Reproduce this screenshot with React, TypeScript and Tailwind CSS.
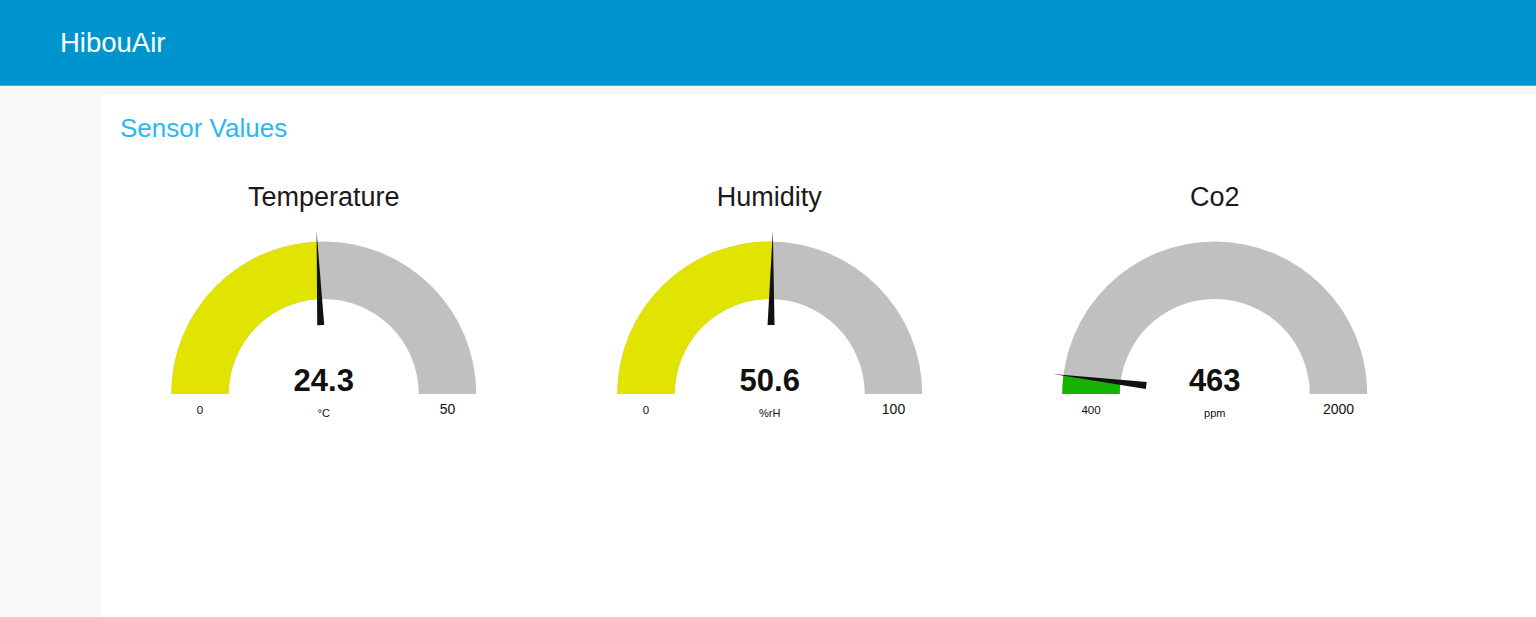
import React from "react";

type GaugeProps = {
  title: string;
  value: number;
  display: string;
  unit: string;
  min: number;
  max: number;
  color: string;
};

const W = 445.5;
const CX = W / 2;
const CY = 184;
const RO = 152.5;
const RI = 95;

function pt(r: number, a: number): [number, number] {
  return [CX - r * Math.cos(a), CY - r * Math.sin(a)];
}

function Gauge({ title, value, display, unit, min, max, color }: GaugeProps) {
  const frac = Math.max(0, Math.min(1, (value - min) / (max - min)));
  const a = frac * Math.PI;
  const [ox0, oy0] = pt(RO, 0);
  const [ox1, oy1] = pt(RO, a);
  const [ix1, iy1] = pt(RI, a);
  const [ix0, iy0] = pt(RI, 0);
  const fillPath = `M ${ox0} ${oy0} A ${RO} ${RO} 0 0 1 ${ox1} ${oy1} L ${ix1} ${iy1} A ${RI} ${RI} 0 0 0 ${ix0} ${iy0} Z`;
  const [oxe, oye] = pt(RO, Math.PI);
  const [ixe, iye] = pt(RI, Math.PI);
  const bgPath = `M ${ox0} ${oy0} A ${RO} ${RO} 0 0 1 ${oxe} ${oye} L ${ixe} ${iye} A ${RI} ${RI} 0 0 0 ${ix0} ${iy0} Z`;
  const [tx, ty] = pt(163, a);
  const [bx, by] = pt(69, a);
  const px = Math.sin(a) * 3.5;
  const py = -Math.cos(a) * 3.5;
  const needle = `M ${tx} ${ty} L ${bx + px} ${by + py} L ${bx - px} ${by - py} Z`;
  const minX = CX - (RO + RI) / 2;
  const maxX = CX + (RO + RI) / 2;
  return (
    <div className="flex flex-col items-center">
      <div className="text-[27px] leading-none h-[26px] text-[#1a1a1a]">{title}</div>
      <svg width={W} height={220} viewBox={`0 0 ${W} 220`} className="block">
        <path d={bgPath} fill="#c0c0c0" />
        <path d={fillPath} fill={color} />
        <path d={needle} fill="#111111" />
        <text x={CX} y={181} textAnchor="middle" fontSize="31" fontWeight="bold" fill="#111111" fontFamily="'Liberation Sans', Arial, sans-serif">
          {display}
        </text>
        <text x={CX} y={207} textAnchor="middle" fontSize="11" fill="#111111" fontFamily="'Liberation Sans', Arial, sans-serif">
          {unit}
        </text>
        <text x={minX} y={204} textAnchor="middle" fontSize="11.5" fill="#111111" fontFamily="'Liberation Sans', Arial, sans-serif">
          {min}
        </text>
        <text x={maxX} y={204} textAnchor="middle" fontSize="14" fill="#111111" fontFamily="'Liberation Sans', Arial, sans-serif">
          {max}
        </text>
      </svg>
    </div>
  );
}

export default function App() {
  return (
    <div className="w-[1536px] h-[617px] overflow-hidden bg-[#f8f8f8] flex flex-col font-['Liberation_Sans',Arial,sans-serif]">
      <header className="h-[86px] shrink-0 bg-[#0094cf] flex items-center pl-[60px] border-b border-[#49aedc]">
        <span className="text-white text-[27.5px] leading-none">HibouAir</span>
      </header>
      <div className="flex-1 pt-[9px] pl-[101px]">
        <main className="bg-white h-full">
          <div className="pt-[20px] pl-[19px] text-[26px] leading-none h-[45px] text-[#2ab7f6]">Sensor Values</div>
          <div className="mt-[44px] grid grid-cols-[repeat(3,445.5px)]">
            <Gauge title="Temperature" value={24.3} display="24.3" unit="°C" min={0} max={50} color="#e1e400" />
            <Gauge title="Humidity" value={50.6} display="50.6" unit="%rH" min={0} max={100} color="#e1e400" />
            <Gauge title="Co2" value={463} display="463" unit="ppm" min={400} max={2000} color="#16b400" />
          </div>
        </main>
      </div>
    </div>
  );
}
